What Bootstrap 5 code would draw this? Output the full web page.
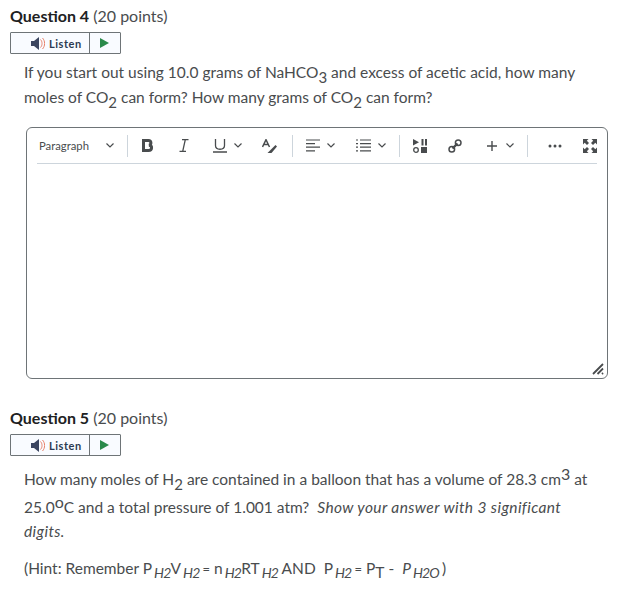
<!DOCTYPE html>
<html lang="en"><head><meta charset="utf-8"><title>Questions</title>
<link href="https://cdn.jsdelivr.net/npm/bootstrap@5.3.0/dist/css/bootstrap.min.css" rel="stylesheet">
<style>
body{font-family:Lato,"Liberation Sans",sans-serif;background:#fff;color:#494c4e;font-size:15.5px;padding:6px 0 0 10px;width:628px;overflow:hidden}
.qhead{font-size:16px;line-height:19px;margin:0 0 7px;font-weight:400;color:#494c4e}
.qhead b{font-weight:700;color:#202122}
.listen{width:111px;height:22px;border:1px solid #6e7477;border-radius:1px;background:#f9fbff;display:flex;box-sizing:border-box}
.listen-main{width:79px;border-right:1px solid #6e7477;display:flex;align-items:center;padding-left:20px;gap:4px;font-size:11px;font-weight:700;color:#2c3a52;letter-spacing:.55px;height:20px;line-height:1}
.listen-play{flex:1;display:flex;align-items:center;padding-left:10px}
.qbody{padding-left:14px;width:590px}
.qbody p{margin:0}
.q4body{margin-top:6px;line-height:25px;height:53px}
.q4body sub,.q5body sub{font-size:15px;bottom:-.3em;line-height:0}
.q5body sup{font-size:16px;top:-.3em;line-height:0}
.q5body i{letter-spacing:.39px}
.editor{margin:14px 0 0 16px;width:582px;height:252px;border:1px solid #6e7477;border-radius:6px;position:relative;padding:0 10px}
.tbar{height:36px;border-bottom:1px solid #cdd5dc;display:flex;align-items:center;color:#494c4e;width:560px}
.tbar svg{display:block;flex:none}
.para{font-size:11.300px;width:69px;padding-left:2px;color:#494c4e;line-height:1}
.sep{width:1px;height:22px;background:#cdd5dc;flex:none}
.g7{margin-left:7px}.g9{margin-left:9px}.g13{margin-left:13px}.g14{margin-left:14px}.g15{margin-left:15px}.g20{margin-left:20px}.g21{margin-left:21px}.g24{margin-left:24px}.g25{margin-left:25px}
.grip{position:absolute;right:3px;bottom:3px}
.q5head{margin-top:29px}
.q5body{margin-top:10px}
.l1{line-height:27px;white-space:nowrap}
.l2{line-height:29px;white-space:nowrap}
.l3{line-height:19px}
.hint{margin-top:13px!important;line-height:28px;white-space:nowrap}
.hint .s{position:relative;top:4px;font-style:italic;font-size:14px;letter-spacing:-.8px;margin-left:2px}
.hint .n{position:relative;top:4px}
.hint .eq{font-size:13px;margin:0 4px 0 3px}
.hint .dash{margin:0 8px 0 4px}
.hint .pi{font-style:italic}
.hint .tail{margin-left:3px}
</style></head><body>
<h2 class="qhead"><b>Question 4</b> (20 points)</h2>
<div class="listen"><div class="listen-main"><svg width="14" height="13" viewBox="0 0 14 13"><path d="M0 4h3l5-4v13L3 9H0z" fill="#3b4560"/><path d="M9.500 2.500c2 2 2 6 0 8M11.500 1c2.800 3 2.800 8 0 11" fill="none" stroke="#e8826a" stroke-width="1"/></svg><span>Listen</span></div><div class="listen-play"><svg width="9" height="10" viewBox="0 0 9 10"><path d="M0 0l9 5-9 5z" fill="#2a8a4a"/></svg></div></div>
<div class="qbody q4body"><p>If you start out using 10.0 grams of NaHCO<sub>3</sub> and excess of acetic acid, how many moles of CO<sub>2</sub> can form? How many grams of CO<sub>2</sub> can form?</p></div>
<div class="editor">
<div class="tbar">
<span class="para">Paragraph</span>
<svg width="8" height="5" viewBox="0 0 8 5"><path d="M.5.5L4 4 7.500.5" fill="none" stroke="#494c4e" stroke-width="1.200"/></svg>
<span class="sep g13"></span>
<svg class="g14" width="12" height="13" viewBox="0 0 12 13"><path d="M1.500 1.500h5c3 0 3.200 4.200.5 4.800 3.600.3 3.400 5.200-.5 5.200h-5z" fill="none" stroke="#494c4e" stroke-width="3"/></svg>
<svg class="g25" width="10" height="13" viewBox="0 0 10 13"><path d="M3 .7h6.500M.5 12.300h6.500M6.300.7L3.700 12.300" fill="none" stroke="#494c4e" stroke-width="1.300"/></svg>
<svg class="g24" width="14" height="15" viewBox="0 0 14 15"><path d="M2.500 1v6.500c0 5 9 5 9 0V1M0 14h14" fill="none" stroke="#494c4e" stroke-width="1.300"/></svg>
<svg class="g7" width="8" height="5" viewBox="0 0 8 5"><path d="M.5.5L4 4 7.500.5" fill="none" stroke="#494c4e" stroke-width="1.200"/></svg>
<svg class="g20" width="15" height="14" viewBox="0 0 15 14"><path d="M.5 8L4 .7 7.500 8M2 5.500h4" fill="none" stroke="#494c4e" stroke-width="1.500"/><path d="M5.500 14l8-8L15 7.500 9.500 14z" fill="#494c4e"/></svg>
<span class="sep g15"></span>
<svg class="g13" width="14" height="13" viewBox="0 0 14 13"><path d="M0 1h14M0 4.600h9M0 8.200h14M0 11.800h9" stroke="#494c4e" stroke-width="1.200"/></svg>
<svg class="g7" width="8" height="5" viewBox="0 0 8 5"><path d="M.5.5L4 4 7.500.5" fill="none" stroke="#494c4e" stroke-width="1.200"/></svg>
<svg class="g21" width="15" height="13" viewBox="0 0 15 13"><path d="M4 1h11M4 4.600h11M4 8.200h11M4 11.800h11M0 1h2M0 4.600h2M0 8.200h2M0 11.800h2" stroke="#494c4e" stroke-width="1.200"/></svg>
<svg class="g7" width="8" height="5" viewBox="0 0 8 5"><path d="M.5.5L4 4 7.500.5" fill="none" stroke="#494c4e" stroke-width="1.200"/></svg>
<span class="sep g13"></span>
<svg class="g13" width="14" height="14" viewBox="0 0 14 14"><path d="M0 0l6 3.300L0 6.500z" fill="#494c4e"/><path d="M8.500 0h2v6.500h-2zM12 0h2v6.500h-2zM8 8h6v6H8z" fill="#494c4e"/><circle cx="3" cy="11" r="2.300" fill="none" stroke="#494c4e" stroke-width="1.300"/></svg>
<svg class="g21" width="14" height="14" viewBox="0 0 14 14"><circle cx="3.800" cy="10.200" r="2.800" fill="none" stroke="#494c4e" stroke-width="1.500"/><circle cx="10.200" cy="3.800" r="2.800" fill="none" stroke="#494c4e" stroke-width="1.500"/><path d="M4.500 9.500l5-5" stroke="#494c4e" stroke-width="2.400"/></svg>
<svg class="g25" width="10" height="10" viewBox="0 0 10 10"><path d="M5 0v10M0 5h10" stroke="#494c4e" stroke-width="1.400"/></svg>
<svg class="g9" width="8" height="5" viewBox="0 0 8 5"><path d="M.5.5L4 4 7.500.5" fill="none" stroke="#494c4e" stroke-width="1.200"/></svg>
<span class="sep g13"></span>
<svg class="g20" width="14" height="4" viewBox="0 0 14 4"><circle cx="2" cy="2" r="1.500" fill="#494c4e"/><circle cx="7" cy="2" r="1.500" fill="#494c4e"/><circle cx="12" cy="2" r="1.500" fill="#494c4e"/></svg>
<svg class="g21" width="14" height="14" viewBox="0 0 14 14"><path d="M0 0h5.500L3.800 1.700 6 4 4 6 1.700 3.800 0 5.500zM14 0H8.500l1.700 1.700L8 4l2 2 2.300-2.200L14 5.500zM0 14V8.500l1.700 1.700L4 8l2 2-2.200 2.300L5.500 14zM14 14H8.500l1.700-1.700L8 10l2-2 2.300 2.200L14 8.500z" fill="#494c4e"/></svg>
</div>
<svg class="grip" width="12" height="12" viewBox="0 0 12 12"><path d="M1 11L11 1M5.500 11L11 5.500M10 11l1-1" stroke="#494c4e" stroke-width="1.800"/></svg>
</div>
<h2 class="qhead q5head"><b>Question 5</b> (20 points)</h2>
<div class="listen"><div class="listen-main"><svg width="14" height="13" viewBox="0 0 14 13"><path d="M0 4h3l5-4v13L3 9H0z" fill="#3b4560"/><path d="M9.500 2.500c2 2 2 6 0 8M11.500 1c2.800 3 2.800 8 0 11" fill="none" stroke="#e8826a" stroke-width="1"/></svg><span>Listen</span></div><div class="listen-play"><svg width="9" height="10" viewBox="0 0 9 10"><path d="M0 0l9 5-9 5z" fill="#2a8a4a"/></svg></div></div>
<div class="qbody q5body">
<p class="l1">How many moles of H<sub>2</sub> are contained in a balloon that has a volume of 28.3 cm<sup>3</sup> at</p>
<p class="l2">25.0<sup>o</sup>C and a total pressure of 1.001 atm?&nbsp; <i>Show your answer with 3 significant</i></p>
<p class="l3"><i>digits.</i></p>
<p class="hint">(Hint: Remember P<span class="s">H2</span>V<span class="s">H2</span><span class="eq">=</span>n<span class="s">H2</span>RT<span class="s">H2</span> AND&nbsp; P<span class="s">H2</span><span class="eq">=</span>P<span class="n">T</span><span class="dash">-</span><span class="pi">P</span><span class="s">H2O</span><span class="tail">)</span></p>
</div>
</body></html>
